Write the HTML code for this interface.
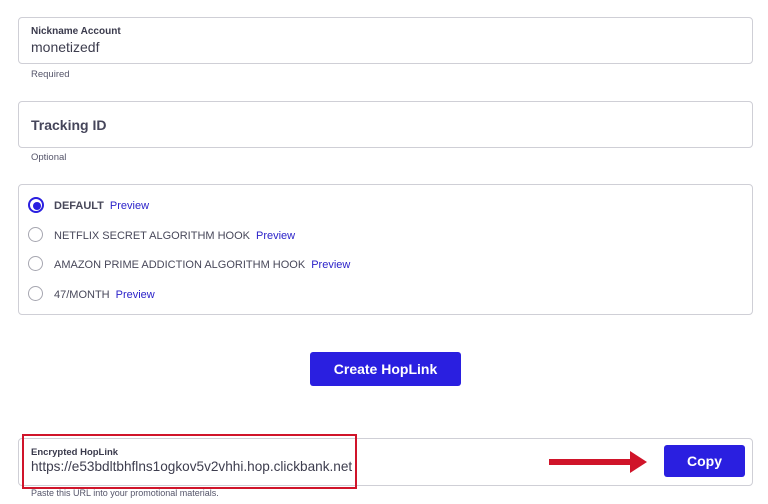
<!DOCTYPE html>
<html><head><style>
body{margin:0;width:768px;height:504px;background:#fff;font-family:"Liberation Sans",sans-serif;position:relative;overflow:hidden;color:#3d3d4e}
.a{position:absolute}
.box{position:absolute;border:1px solid #cfcfd6;border-radius:4px;background:#fff}
.lbl{font-size:10px;font-weight:bold;color:#3a3a4c}
.small{font-size:9.5px;color:#55556a}
.r{position:absolute;left:28px;width:13px;height:13px;border:1.5px solid #a6a6b0;border-radius:50%}
.opt{position:absolute;left:54px;font-size:11px;color:#48485a}
.opt span{color:#2b22c9;margin-left:6px}
</style></head><body>
<div class="box" style="left:18px;top:17px;width:733px;height:45px"></div>
<div class="a lbl" style="left:31px;top:26px">Nickname Account</div>
<div class="a" style="left:31px;top:39px;font-size:14px;color:#3d3d4e">monetizedf</div>
<div class="a small" style="left:31px;top:69px">Required</div>

<div class="box" style="left:18px;top:101px;width:733px;height:45px"></div>
<div class="a" style="left:31px;top:117px;font-size:14px;font-weight:bold;color:#45455a">Tracking ID</div>
<div class="a small" style="left:31px;top:152px">Optional</div>

<div class="box" style="left:18px;top:184px;width:733px;height:129px"></div>
<div class="r" style="top:197px;border-color:#2a1fe0;border-width:2px;width:12px;height:12px"></div>
<div class="a" style="left:33px;top:202px;width:8px;height:8px;border-radius:50%;background:#2a1fe0"></div>
<div class="opt" style="top:200px;font-weight:bold">DEFAULT<span style="font-weight:normal">Preview</span></div>
<div class="r" style="top:227px"></div>
<div class="opt" style="top:230px">NETFLIX SECRET ALGORITHM HOOK<span>Preview</span></div>
<div class="r" style="top:256px"></div>
<div class="opt" style="top:259px">AMAZON PRIME ADDICTION ALGORITHM HOOK<span>Preview</span></div>
<div class="r" style="top:286px"></div>
<div class="opt" style="top:289px">47/MONTH<span>Preview</span></div>

<div class="a" style="left:310px;top:352px;width:151px;height:34px;background:#2a1fe0;border-radius:3px;color:#fff;font-weight:bold;font-size:14px;text-align:center;line-height:34px">Create HopLink</div>

<div class="box" style="left:18px;top:438px;width:733px;height:46px"></div>
<div class="a" style="left:22px;top:434px;width:331px;height:51px;border:2px solid #d0142a"></div>
<div class="a lbl" style="left:31px;top:447px;font-size:9.5px">Encrypted HopLink</div>
<div class="a" style="left:31px;top:459px;font-size:13.6px;color:#3d3d4e">https://e53bdltbhflns1ogkov5v2vhhi.hop.clickbank.net</div>
<div class="a small" style="left:31px;top:488px;font-size:9px">Paste this URL into your promotional materials.</div>
<svg class="a" style="left:548px;top:449px" width="100" height="26"><path d="M1 10H82V2L99 13L82 24V16H1Z" fill="#d0142a"/></svg>
<div class="a" style="left:664px;top:445px;width:81px;height:32px;background:#2a1fe0;border-radius:3px;color:#fff;font-weight:bold;font-size:14px;text-align:center;line-height:32px">Copy</div>
</body></html>
